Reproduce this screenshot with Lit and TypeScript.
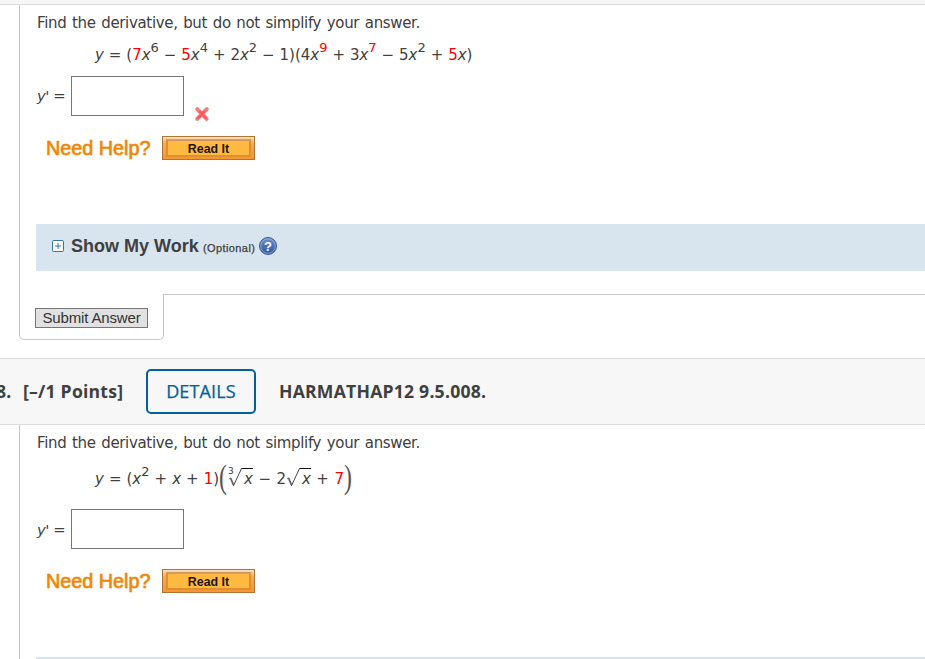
import { LitElement, html, css, svg } from "lit";
import { customElement, property } from "lit/decorators.js";

@customElement("help-row")
class HelpRow extends LitElement {
  static styles = css`
    :host { display: flex; height: 24px; align-items: center; padding-left: 26px; font-family: "Liberation Sans", Arial, sans-serif; }
    .label { width: 116px; box-sizing: border-box; font-size: 19.8px; line-height: 24px; color: #ec8609; -webkit-text-stroke: 0.5px #ec8609; text-shadow: 0 0 2px #ffd09a; white-space: nowrap; }
    .button { box-sizing: border-box; width: 93px; height: 24px; border: 1px solid #b07535; background: linear-gradient(#fde0c4, #f9a850 30%, #f8962c); padding: 2px 3px; }
    .face { box-sizing: border-box; height: 18px; border: 2px solid #dc8f35; border-top-color: #cf9a66; border-radius: 1px; background: #fdb940; text-align: center; font: bold 12.4px/16px "Liberation Sans", Arial, sans-serif; color: #1d1303; }
  `;
  render() {
    return html`<div class="label">Need Help?</div><div class="button"><div class="face">Read It</div></div>`;
  }
}

@customElement("answer-row")
class AnswerRow extends LitElement {
  @property({ type: Boolean }) wrong = false;
  static styles = css`
    :host { display: flex; height: 46px; padding-left: 17px; font: 15px/20px "DejaVu Sans", Verdana, sans-serif; color: #404040; }
    .label { width: 34px; padding-top: 11px; white-space: pre; font-size: 14.8px; letter-spacing: -0.4px; }
    :host([wrong]) .label { padding-top: 10px; }
    .field { box-sizing: border-box; width: 113px; height: 40px; border: 1px solid #767676; background: #fff; }
    svg { margin: 30px 0 0 10px; display: block; }
    i { font-style: oblique; }
  `;
  render() {
    return html`<div class="label"><i>y</i><i>'</i> =</div><div class="field"></div>
      ${this.wrong ? html`<svg width="16" height="16" viewBox="0 0 16 16">
        <path d="M3.2 3.2 12.6 12.8M12.8 3.2 3.2 12.8" stroke="#fa7a7c" stroke-width="4" stroke-linecap="round"/>
        <path d="M6 6 12 12M10 6 4 12" stroke="#fb5458" stroke-width="2" stroke-linecap="round"/></svg>` : ""}`;
  }
}

const radical = (width: number) => svg`
  <path d="M.8 11 3 9.8" stroke="#777" stroke-width="1" fill="none"/>
  <path d="M2.6 10 5.4 16.8" stroke="#666" stroke-width="1.8" fill="none"/>
  <path d="M5.3 18 13.5 .5" stroke="#444" stroke-width="1" fill="none"/>
  <path d="M13.5 .5H${width}" stroke="#111" stroke-width="1" fill="none"/>`;

@customElement("app-root")
class AppRoot extends LitElement {
  static styles = css`
    :host { display: block; width: 925px; height: 659px; overflow: hidden; background: #fff; color: #404040; font: 15px/20px "DejaVu Sans", Verdana, sans-serif; }
    .strip { box-sizing: border-box; height: 5px; background: #f6f6f6; border-bottom: 1px solid #ddd; }
    .question { margin-left: 19px; border-left: 1px solid #c8c8c8; }
    .first { height: 289px; }
    .prompt { padding: 8px 0 0 17px; height: 20px; white-space: nowrap; letter-spacing: -0.34px; word-spacing: 1.2px; }
    .eq { display: flex; white-space: pre; padding-left: 75px; }
    .eq1 { margin-top: 12px; height: 31px; word-spacing: 0.15px; }
    .eq2 { margin-top: 4px; height: 52px; padding-top: 12px; box-sizing: border-box; word-spacing: 0.25px; }
    .wide { word-spacing: 0.7px; }
    i { font-style: oblique; }
    b { font-weight: normal; color: #f00; }
    sup { font-size: 13px; line-height: 0; vertical-align: 8px; }
    .root { display: flex; height: 20px; margin-top: -1px; position: relative; }
    .root svg { display: block; }
    .root i { margin: 1px 0 0 -9px; }
    .index { position: absolute; left: 0; top: -2px; font-size: 9px; line-height: 10px; }
    .delim { display: block; width: 7px; height: 20px; font: 34px/20px "Liberation Serif", serif; transform: translateY(-2px) scaleX(.7); transform-origin: 0 0; color: #555; }
    .open { margin-right: 2px; }
    .help1 { margin-top: 14px; }
    .work { display: flex; box-sizing: border-box; margin: 64px 0 0 16px; height: 47px; padding: 11px 0 0 16px; background: #d9e5ee; font-family: "Liberation Sans", Arial, sans-serif; }
    .plus { margin: 5px 7px 0 0; }
    .title { font-size: 18px; line-height: 22px; font-weight: bold; width: 132px; white-space: nowrap; }
    .optional { font-size: 11px; line-height: 26px; letter-spacing: .4px; width: 55px; -webkit-text-stroke: .25px #404040; }
    .q { margin: 2px 0 0 1px; }
    .foot { display: flex; height: 46px; margin-left: 19px; }
    .tab { box-sizing: border-box; width: 145px; height: 46px; border: 1px solid #c8c8c8; border-top: 0; border-radius: 0 0 5px 5px; padding: 14px 0 0 15px; }
    .rule { flex: 1; border-top: 1px solid #c8c8c8; margin-left: -1px; }
    .submit { box-sizing: border-box; width: 113px; height: 20px; border: 1px solid #767676; background: #e1e1e1; color: #333; text-align: center; font: 15px/18px "Liberation Sans", Arial, sans-serif; letter-spacing: -.15px; white-space: nowrap; }
    .header { display: flex; box-sizing: border-box; margin-top: 18px; height: 67px; border: solid #ddd; border-width: 1px 0; background: #f7f7f7; padding-top: 10px; font: 700 17.6px/45px "Open Sans", sans-serif; letter-spacing: .22px; color: #404040; white-space: nowrap; }
    .number { width: 23px; margin-left: -4px; margin-right: 4px; }
    .points { width: 123px; }
    .details { box-sizing: border-box; width: 110px; height: 45px; border: 2px solid #006298; border-radius: 5px; color: #006298; font-size: 18px; font-weight: 400; -webkit-text-stroke: .25px #006298; letter-spacing: .15px; line-height: 41px; text-align: center; margin-right: 23px; }
    .second { height: 234px; }
    .help2 { margin-top: 14px; }
    .next { margin-left: 16px; margin-top: 64px; height: 2px; background: #d9e5ee; }
  `;
  render() {
    return html`
      <div class="strip"></div>
      <section class="question first">
        <div class="prompt">Find the derivative, but do not simplify your answer.</div>
        <div class="eq eq1"><span><i>y</i> = (<b>7</b><i>x</i><sup>6</sup> − <b>5</b><i>x</i><sup>4</sup> + 2<i>x</i><sup>2</sup> − 1)(4<i>x</i><sup><b>9</b></sup> + 3<i>x</i><sup><b>7</b></sup> − 5<i>x</i><sup>2</sup> + <b>5</b><i>x</i>)</span></div>
        <answer-row wrong></answer-row>
        <help-row class="help1"></help-row>
        <div class="work">
          <svg class="plus" width="12" height="12"><rect x=".5" y=".5" width="11" height="11" rx="1" fill="#fff" stroke="#3973a8"/><path d="M3 6h6M6 3v6" stroke="#3973a8"/></svg>
          <div class="title">Show My Work</div><div class="optional">(Optional)</div>
          <svg class="q" width="18" height="18" viewBox="0 0 18 18">
            <defs><linearGradient id="g" x2="0" y2="1"><stop stop-color="#7195cc"/><stop offset="1" stop-color="#2a509a"/></linearGradient></defs>
            <circle cx="9" cy="9" r="8.5" fill="url(#g)" stroke="#34599a"/><circle cx="9" cy="9" r="7.3" fill="none" stroke="#a6bddf" stroke-width=".7"/>
            <text x="9" y="13.5" text-anchor="middle" font-family="Liberation Sans" font-weight="bold" font-size="13" fill="#fff">?</text>
          </svg>
        </div>
      </section>
      <div class="foot"><div class="tab"><div class="submit">Submit Answer</div></div><div class="rule"></div></div>
      <header class="header">
        <div class="number">8.</div><div class="points">[–/1 Points]</div><div class="details">DETAILS</div><div>HARMATHAP12 9.5.008.</div>
      </header>
      <section class="question second">
        <div class="prompt">Find the derivative, but do not simplify your answer.</div>
        <div class="eq eq2"><span><i>y</i> = (<i>x</i><sup>2</sup> + <i>x</i> + <b>1</b>)</span><span class="delim open">(</span><span class="root"><svg width="25" height="19">${radical(25)}</svg><i>x</i><span class="index">3</span></span><span class="wide"> − 2</span><span class="root"><svg width="25" height="19">${radical(25)}</svg><i>x</i></span><span class="wide"> + <b>7</b></span><span class="delim">)</span></div>
        <answer-row></answer-row>
        <help-row class="help2"></help-row>
        <div class="next"></div>
      </section>`;
  }
}
